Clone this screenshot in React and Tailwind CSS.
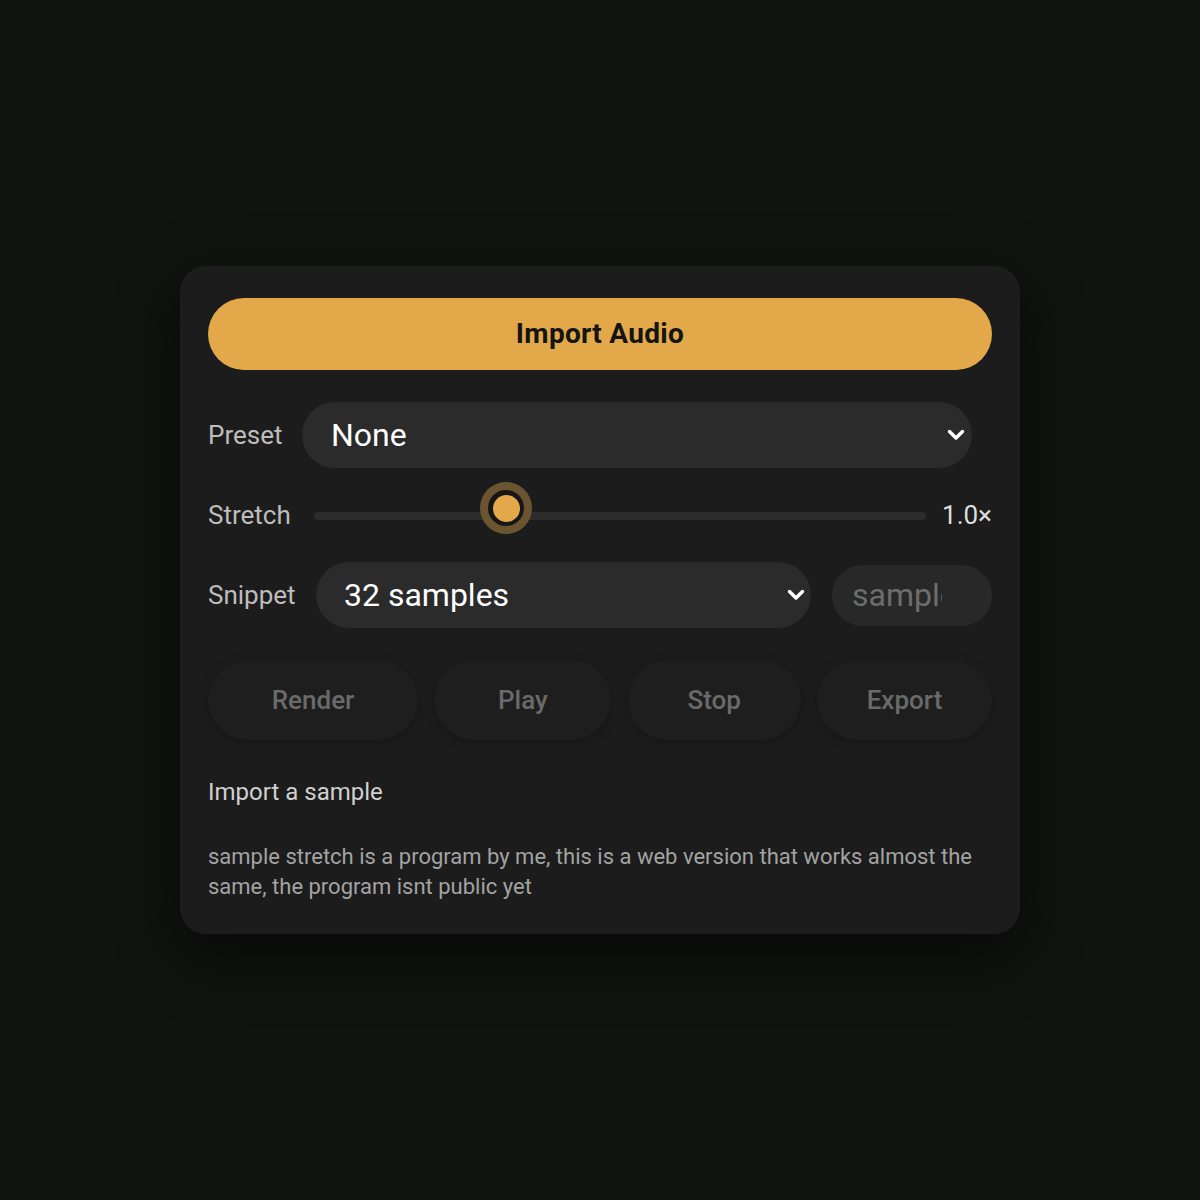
import React from "react";

function Chevron() {
  return (
    <svg width="18" height="12" viewBox="0 0 18 12" fill="none">
      <path d="M2.5 2.5 L9 9 L15.5 2.5" stroke="white" strokeWidth="3.4" strokeLinecap="round" strokeLinejoin="round" />
    </svg>
  );
}

export default function App() {
  return (
    <div
      className="w-[1200px] h-[1200px] bg-[#111311] flex items-start justify-center pt-[266px]"
      style={{ fontFamily: "Roboto, 'Noto Sans', sans-serif" }}
    >
      <div className="w-[840px] rounded-[26px] bg-[#1b1c1b] px-[28px] pt-[32px] pb-[32px] shadow-[0_20px_60px_rgba(0,0,0,0.6)] flex flex-col">
        <button className="h-[72px] w-full rounded-full bg-[#e3a84a] text-[#141414] text-[28px] font-bold tracking-[0.3px]">
          Import Audio
        </button>

        <div className="mt-[32px] flex items-center h-[66px]">
          <span className="text-[26px] text-[#bdbdbd] w-[94px] shrink-0">Preset</span>
          <div className="w-[670px] h-[66px] rounded-full bg-[#2a2b2a] flex items-center pl-[29px] pr-[7px] justify-between">
            <span className="text-[32px] text-white">None</span>
            <Chevron />
          </div>
        </div>

        <div className="mt-[32px] flex items-center h-[30px]">
          <span className="text-[26px] text-[#bdbdbd] w-[106px] shrink-0">Stretch</span>
          <div className="relative w-[612px] h-[30px] flex items-center">
            <div className="w-full h-[8px] mt-[2px] rounded-full bg-[#2b2c2b]" />
            <div className="absolute left-[166px] top-[-18px] w-[52px] h-[52px] rounded-full bg-[#6b5530] flex items-center justify-center">
              <div className="w-[36px] h-[36px] rounded-full bg-[#161616] flex items-center justify-center">
                <div className="w-[27px] h-[27px] rounded-full bg-[#e3a84a]" />
              </div>
            </div>
          </div>
          <span className="ml-auto text-[26px] text-[#dedede]">1.0×</span>
        </div>

        <div className="mt-[32px] flex items-center h-[66px]">
          <span className="text-[26px] text-[#bdbdbd] w-[108px] shrink-0">Snippet</span>
          <div className="w-[495px] h-[66px] rounded-full bg-[#2a2b2a] flex items-center pl-[28px] pr-[6px] justify-between">
            <span className="text-[32px] text-white">32 samples</span>
            <Chevron />
          </div>
          <div className="ml-auto w-[160px] h-[61px] rounded-full bg-[#272827] flex items-center pl-[20px] overflow-hidden">
            <div className="w-[90px] overflow-hidden whitespace-nowrap text-[32px] text-[#6d6d6d]">sample</div>
          </div>
        </div>

        <div className="mt-[32px] flex justify-between h-[80px]">
          {[
            ["Render", "w-[210px]"],
            ["Play", "w-[177px]"],
            ["Stop", "w-[173px]"],
            ["Export", "w-[175px]"],
          ].map(([t, w]) => (
            <button
              key={t}
              className={`${w} h-[80px] rounded-full bg-[#1d1e1d] shadow-[0_2px_8px_rgba(0,0,0,0.25)] text-[26px] font-medium text-[#6a6a6a]`}
            >
              {t}
            </button>
          ))}
        </div>

        <div className="mt-[37px] text-[24px] leading-[30px] text-[#d0d0d0]">Import a sample</div>

        <div className="mt-[35px] text-[22px] leading-[30px] text-[#a3a3a3]">
          sample stretch is a program by me, this is a web version that works almost the same, the program isnt public yet
        </div>
      </div>
    </div>
  );
}
